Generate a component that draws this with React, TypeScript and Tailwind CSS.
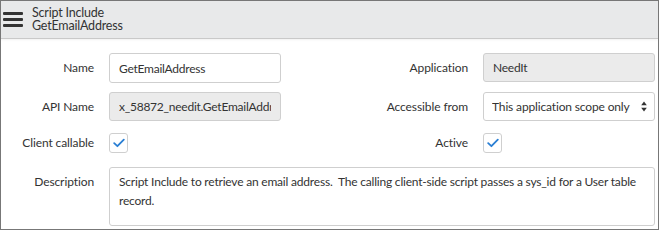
import React from "react";

const font = { fontFamily: "Lato, 'Open Sans', sans-serif" };

function Label({ children }: { children: React.ReactNode }) {
  return (
    <label className="flex items-center justify-end text-[12px] tracking-[-0.1px] text-[#333]">
      {children}
    </label>
  );
}

function TextField({
  value,
  readOnly,
  h = "h-[30px]",
}: {
  value: string;
  readOnly?: boolean;
  h?: string;
}) {
  return (
    <input
      type="text"
      value={value}
      readOnly
      className={`${h} w-full rounded-[3px] border border-[#cfcfcf] px-[9px] text-[12px] tracking-[-0.25px] text-[#333] outline-none ${
        readOnly ? "bg-[#ebebeb]" : "bg-white"
      }`}
    />
  );
}

function Check() {
  return (
    <div className="flex h-[20px] w-[19px] items-center justify-center rounded-[3px] border border-[#cfcfcf] bg-white">
      <svg width="12" height="10" viewBox="0 0 12 10" fill="none">
        <path
          d="M1.2 5.2 L4.4 8.2 L10.8 1.6"
          stroke="#2a7fd4"
          strokeWidth="1.8"
          strokeLinecap="round"
          strokeLinejoin="round"
        />
      </svg>
    </div>
  );
}

export default function App() {
  return (
    <div
      className="h-[230px] w-[659px] overflow-hidden border border-[#777] bg-white"
      style={font}
    >
      <div className="flex h-[38px] items-center border-b border-[#c9c9c9] bg-[#e8e9ea] shadow-[0_1px_2px_rgba(0,0,0,0.06)]">
        <div className="ml-[2px] flex w-[20px] flex-col gap-[3px]">
          <span className="h-[3px] w-full rounded-[1px] bg-[#333]" />
          <span className="h-[3px] w-full rounded-[1px] bg-[#333]" />
          <span className="h-[3px] w-full rounded-[1px] bg-[#333]" />
        </div>
        <div className="ml-[9px] -mt-[1px] flex flex-col text-[12.5px] leading-[13.5px] tracking-[-0.2px] text-[#333]">
          <span>Script Include</span>
          <span>GetEmailAddress</span>
        </div>
      </div>

      <div className="grid grid-cols-[93px_172px_172px_172px] gap-x-[15px] pt-[14px]">
        <Label>Name</Label>
        <TextField value="GetEmailAddress" />
        <Label>Application</Label>
        <TextField value="NeedIt" readOnly h="h-[29px]" />

        <div className="col-span-4 h-[9px]" />

        <Label>API Name</Label>
        <TextField value="x_58872_needit.GetEmailAddress" readOnly h="h-[29px]" />
        <Label>Accessible from</Label>
        <div className="relative">
          <select className="h-[29px] w-full appearance-none rounded-[3px] border border-[#cfcfcf] bg-white pl-[8px] text-[12px] tracking-[-0.15px] text-[#333] outline-none">
            <option>This application scope only</option>
          </select>
          <svg
            className="pointer-events-none absolute right-[8px] top-[9px]"
            width="6"
            height="11"
            viewBox="0 0 6 11"
          >
            <path d="M3 0.5 L5.8 4.3 H0.2 Z" fill="#333" />
            <path d="M3 10.5 L5.8 6.7 H0.2 Z" fill="#333" />
          </svg>
        </div>

        <div className="col-span-4 h-[12px]" />

        <Label>Client callable</Label>
        <Check />
        <Label>Active</Label>
        <Check />

        <div className="col-span-4 h-[14px]" />

        <label className="flex justify-end pt-[6px] text-[12px] tracking-[-0.1px] text-[#333]">
          Description
        </label>
        <div className="col-span-3 h-[59px] overflow-hidden whitespace-pre-wrap rounded-[3px] border border-[#cfcfcf] bg-white pl-[9px] pr-[4px] pt-[4px] text-[12px] leading-[19px] tracking-[-0.2px] text-[#333]">
          Script Include to retrieve an email address.  The calling client-side script passes a sys_id for a User table record.
        </div>
      </div>
    </div>
  );
}
